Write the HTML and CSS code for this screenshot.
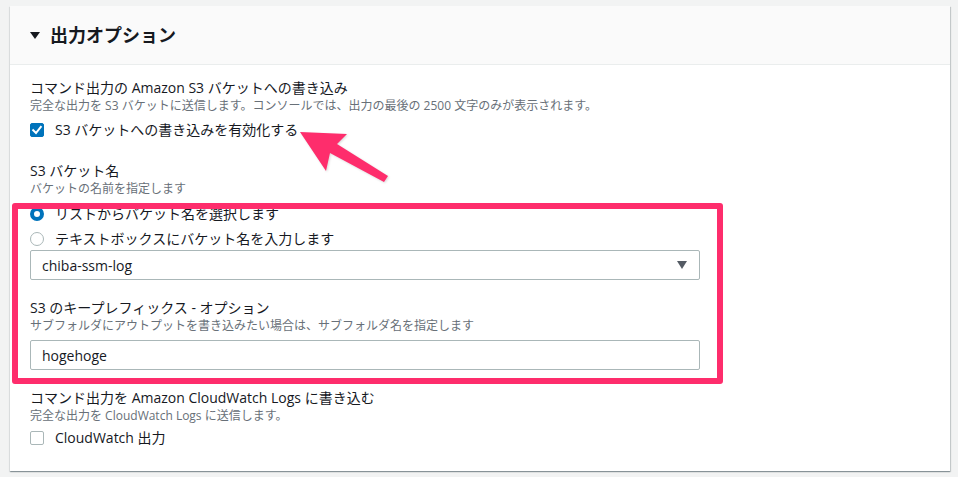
FILE: index.html
```html
<!DOCTYPE html>
<html lang="ja">
<head>
<meta charset="utf-8">
<title>出力オプション</title>
<link rel="stylesheet" href="styles.css">
</head>
<body>
<div class="page">
  <section class="panel">
    <header class="panel-header">
      <span class="caret-down"></span>
      <h2 class="panel-title">出力オプション</h2>
    </header>
    <div class="panel-body">
      <div class="field">
        <div class="label">コマンド出力の Amazon S3 バケットへの書き込み</div>
        <div class="desc">完全な出力を S3 バケットに送信します。コンソールでは、出力の最後の 2500 文字のみが表示されます。</div>
        <label class="check-row">
          <span class="checkbox checked">
            <svg viewBox="0 0 14 14" width="14" height="14"><path d="M3.2 7.2 L6 10 L10.8 4" fill="none" stroke="#fff" stroke-width="2" stroke-linecap="square"/></svg>
          </span>
          <span class="check-text">S3 バケットへの書き込みを有効化する</span>
        </label>
      </div>

      <div class="field field-bucket">
        <div class="label">S3 バケット名</div>
        <div class="desc">バケットの名前を指定します</div>
        <div class="radios">
          <label class="radio-row"><span class="radio selected"></span><span class="check-text">リストからバケット名を選択します</span></label>
          <label class="radio-row"><span class="radio"></span><span class="check-text">テキストボックスにバケット名を入力します</span></label>
        </div>
        <div class="select">
          <span class="select-value">chiba-ssm-log</span>
          <span class="select-caret"></span>
        </div>
      </div>

      <div class="field field-prefix">
        <div class="label">S3 のキープレフィックス - オプション</div>
        <div class="desc">サブフォルダにアウトプットを書き込みたい場合は、サブフォルダ名を指定します</div>
        <div class="input">hogehoge</div>
      </div>

      <div class="field field-cw">
        <div class="label">コマンド出力を Amazon CloudWatch Logs に書き込む</div>
        <div class="desc">完全な出力を CloudWatch Logs に送信します。</div>
        <label class="check-row check-row-cw">
          <span class="checkbox"></span>
          <span class="check-text">CloudWatch 出力</span>
        </label>
      </div>
    </div>
  </section>

  <div class="highlight-box"></div>
  <svg class="annotation-arrow" width="958" height="477" viewBox="0 0 958 477">
    <polygon points="300,132 347,134 337,144 388,176 384,182 330,153 326,171" fill="#fe2d6c"/>
  </svg>
</div>
</body>
</html>
```

FILE: styles.css
```css
* { box-sizing: border-box; }

html, body {
  margin: 0;
  padding: 0;
  background: #f2f3f3;
}

body {
  font-family: "Open Sans", "Noto Sans CJK JP", sans-serif;
  color: #16191f;
  width: 958px;
  height: 477px;
  overflow: hidden;
}

.page {
  position: relative;
  width: 958px;
  height: 477px;
  padding: 6px 8px 0 10px;
}

.panel {
  background: #ffffff;
  width: 940px;
  height: 465px;
  box-shadow: 0 1px 1px 0 rgba(0, 28, 36, 0.3), 1px 1px 1px 0 rgba(0, 28, 36, 0.15), -1px 1px 1px 0 rgba(0, 28, 36, 0.05);
  display: flex;
  flex-direction: column;
}

.panel-header {
  height: 59px;
  background: #fafafa;
  border-bottom: 1px solid #eaeded;
  display: flex;
  align-items: center;
  padding: 0 20px;
  gap: 10px;
}

.caret-down {
  width: 0;
  height: 0;
  border-left: 5px solid transparent;
  border-right: 5px solid transparent;
  border-top: 7px solid #16191f;
  margin-top: 1px;
}

.panel-title {
  margin: 0;
  font-size: 18px;
  font-weight: 700;
  line-height: 24px;
  color: #16191f;
}

.panel-body {
  padding: 13px 20px 0 20px;
  display: flex;
  flex-direction: column;
}

.label {
  font-size: 14px;
  line-height: 20px;
  color: #16191f;
}

.desc {
  font-size: 12px;
  line-height: 16px;
  color: #687078;
  margin-top: 0;
}

.check-row, .radio-row {
  display: flex;
  align-items: center;
  height: 20px;
  gap: 11px;
  font-size: 14px;
  color: #16191f;
}

.check-row { margin-top: 6px; }

.check-text {
  font-size: 14px;
  line-height: 20px;
}

.checkbox {
  width: 14px;
  height: 14px;
  border: 1px solid #aab7b8;
  border-radius: 2px;
  background: #fff;
  display: flex;
  align-items: center;
  justify-content: center;
}

.checkbox.checked {
  background: #0073bb;
  border-color: #0073bb;
}

.checkbox.checked svg { display: block; margin: -1px; }

.field-bucket { margin-top: 21px; }

.radios {
  margin-top: 7px;
  display: flex;
  flex-direction: column;
  gap: 5px;
}

.radio {
  width: 14px;
  height: 14px;
  border-radius: 50%;
  border: 1px solid #aab7b8;
  background: #fff;
}

.radio.selected {
  border: 4px solid #0073bb;
}

.select, .input {
  width: 670px;
  height: 30px;
  border: 1px solid #aab7b8;
  border-radius: 2px;
  background: #fff;
  font-size: 14px;
  color: #16191f;
  display: flex;
  align-items: center;
  padding: 0 11px;
}

.select {
  margin-top: 1px;
  justify-content: space-between;
}

.select-caret {
  width: 0;
  height: 0;
  border-left: 5px solid transparent;
  border-right: 5px solid transparent;
  border-top: 8px solid #545b64;
  margin-right: 1px;
}

.field-prefix { margin-top: 18px; }

.input { margin-top: 6px; }

.field-cw { margin-top: 18px; }

.check-row-cw { margin-top: 4px; }

.highlight-box {
  position: absolute;
  left: 12px;
  top: 203px;
  width: 711px;
  height: 181px;
  border: 6px solid #fe2d6c;
  border-radius: 3px;
  pointer-events: none;
}

.annotation-arrow {
  position: absolute;
  left: 0;
  top: 0;
  pointer-events: none;
  filter: drop-shadow(1px 1px 1px rgba(0, 0, 0, 0.15));
}
```
